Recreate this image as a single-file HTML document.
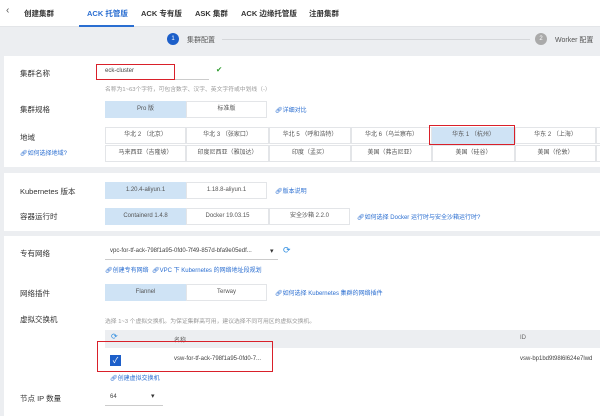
<!DOCTYPE html>
<html><head><meta charset="utf-8"><style>
*{box-sizing:border-box;margin:0;padding:0}
body{width:600px;height:412px;overflow:hidden;background:#eceef1;font-family:"Liberation Sans","Noto Sans CJK SC",sans-serif;position:relative;color:#333}
.a{position:absolute;white-space:nowrap}
.hdr{position:absolute;left:0;top:0;width:600px;height:27px;background:#fff;border-bottom:1px solid #e3e5e8}
.card{position:absolute;left:4px;width:600px;background:#fff}
.lbl{font-size:7.5px;color:#333}
.btn{position:absolute;height:17px;border:1px solid #e3e5e8;background:#fff;font-size:6px;color:#555;text-align:center;line-height:15px;overflow:hidden}
.sel{background:#cfe3f5;border-color:#cfe3f5}
.lnk{font-size:6px;color:#2a6ed1}
.red{position:absolute;border:1.5px solid #d9202a}
.hint{font-size:5.8px;color:#999}
.tab{font-size:7.5px;font-weight:bold;top:8px}
</style></head><body>
<div class="hdr"></div>
<div class="a" style="left:6px;top:5px;font-size:10px;color:#555">‹</div>
<div class="a tab" style="left:24px">创建集群</div>
<div class="a tab" style="left:87px;color:#2a6ed1">ACK 托管版</div>
<div class="a tab" style="left:141px">ACK 专有版</div>
<div class="a tab" style="left:195px">ASK 集群</div>
<div class="a tab" style="left:241px">ACK 边缘托管版</div>
<div class="a tab" style="left:309px">注册集群</div>
<div class="a" style="left:79px;top:25px;width:55px;height:2px;background:#2a6ed1"></div>

<div class="a" style="left:167px;top:33px;width:12px;height:12px;border-radius:50%;background:#1d5fc9;color:#fff;font-size:6px;text-align:center;line-height:12px">1</div>
<div class="a" style="left:187px;top:35px;font-size:7px;color:#555">集群配置</div>
<div class="a" style="left:222px;top:39px;width:308px;height:1px;background:#d5d7da"></div>
<div class="a" style="left:535px;top:33px;width:12px;height:12px;border-radius:50%;background:#aaa;color:#fff;font-size:6px;text-align:center;line-height:12px">2</div>
<div class="a" style="left:555px;top:35px;font-size:7px;color:#555">Worker 配置</div>

<div class="card" style="top:56px;height:111px"></div>
<div class="a lbl" style="left:20px;top:68px">集群名称</div>
<div class="a" style="left:105px;top:79px;width:104px;height:1px;background:#ccc"></div>
<div class="a" style="left:105px;top:68px;font-size:6px;color:#444">eck-cluster</div>
<div class="red" style="left:96px;top:64px;width:79px;height:16px"></div>
<div class="a" style="left:216px;top:65px;font-size:7.5px;color:#2a9a2a">✔</div>
<div class="a hint" style="left:105px;top:84px">名称为1~63个字符，可包含数字、汉字、英文字符或中划线（-）</div>
<div class="a lbl" style="left:20px;top:104px">集群规格</div>
<div class="btn sel" style="left:105px;top:101px;width:81px">Pro 版</div>
<div class="btn" style="left:186px;top:101px;width:81px">标准版</div>
<div class="a lnk" style="left:275px;top:105px">🔗︎详细对比</div>
<div class="a lbl" style="left:20px;top:132px">地域</div>
<div class="a lnk" style="left:20px;top:148px">🔗︎如何选择地域?</div>

<div class="btn" style="left:105px;top:127px;width:81px">华北 2 （北京）</div>
<div class="btn" style="left:186px;top:127px;width:83px">华北 3 （张家口）</div>
<div class="btn" style="left:269px;top:127px;width:82px">华北 5 （呼和浩特）</div>
<div class="btn" style="left:351px;top:127px;width:81px">华北 6（乌兰察布）</div>
<div class="btn sel" style="left:432px;top:127px;width:83px">华东 1 （杭州）</div>
<div class="btn" style="left:515px;top:127px;width:81px">华东 2 （上海）</div>
<div class="btn" style="left:596px;top:127px;width:20px"></div>
<div class="btn" style="left:105px;top:145px;width:81px">马来西亚（吉隆坡）</div>
<div class="btn" style="left:186px;top:145px;width:83px">印度尼西亚（雅加达）</div>
<div class="btn" style="left:269px;top:145px;width:82px">印度（孟买）</div>
<div class="btn" style="left:351px;top:145px;width:81px">美国（弗吉尼亚）</div>
<div class="btn" style="left:432px;top:145px;width:83px">美国（硅谷）</div>
<div class="btn" style="left:515px;top:145px;width:81px">美国（伦敦）</div>
<div class="btn" style="left:596px;top:145px;width:20px"></div>
<div class="red" style="left:429px;top:125px;width:86px;height:20px"></div>

<div class="card" style="top:173px;height:58px"></div>
<div class="a lbl" style="left:20px;top:186px">Kubernetes 版本</div>
<div class="btn sel" style="left:105px;top:182px;width:81px">1.20.4-aliyun.1</div>
<div class="btn" style="left:186px;top:182px;width:81px">1.18.8-aliyun.1</div>
<div class="a lnk" style="left:275px;top:186px">🔗︎版本说明</div>
<div class="a lbl" style="left:20px;top:211px">容器运行时</div>
<div class="btn sel" style="left:105px;top:208px;width:81px">Containerd 1.4.8</div>
<div class="btn" style="left:186px;top:208px;width:83px">Docker 19.03.15</div>
<div class="btn" style="left:269px;top:208px;width:81px">安全沙箱 2.2.0</div>
<div class="a lnk" style="left:357px;top:212px">🔗︎如何选择 Docker 运行时与安全沙箱运行时?</div>

<div class="card" style="top:236px;height:180px"></div>
<div class="a lbl" style="left:20px;top:248px">专有网络</div>
<div class="a" style="left:110px;top:248px;font-size:6px;color:#444">vpc-for-tf-ack-798f1a95-0fd0-7f49-857d-bfa9e05edf...</div>
<div class="a" style="left:270px;top:247px;font-size:7px">▾</div>
<div class="a" style="left:105px;top:259px;width:173px;height:1px;background:#ccc"></div>
<div class="a" style="left:283px;top:245px;font-size:9px;color:#2a8ae0">⟳</div>
<div class="a lnk" style="left:105px;top:265px">🔗︎创建专有网络 &nbsp;🔗︎VPC 下 Kubernetes 的网络地址段规划</div>
<div class="a lbl" style="left:20px;top:288px">网络插件</div>
<div class="btn sel" style="left:105px;top:284px;width:81px">Flannel</div>
<div class="btn" style="left:186px;top:284px;width:81px">Terway</div>
<div class="a lnk" style="left:275px;top:288px">🔗︎如何选择 Kubernetes 集群的网络插件</div>
<div class="a lbl" style="left:20px;top:314px">虚拟交换机</div>
<div class="a hint" style="left:105px;top:316px">选择 1~3 个虚拟交换机。为保证集群高可用，建议选择不同可用区的虚拟交换机。</div>
<div class="a" style="left:105px;top:330px;width:500px;height:18px;background:#eceef1"></div>
<div class="a" style="left:111px;top:332px;font-size:8px;color:#2a8ae0">⟳</div>
<div class="a" style="left:174px;top:335px;font-size:6px;color:#666">名称</div>
<div class="a" style="left:520px;top:335px;font-size:6px;color:#666">ID</div>
<div class="a" style="left:110px;top:355px;width:11px;height:11px;background:#1d5fc9;color:#fff;font-size:8px;line-height:11px;text-align:center">✓</div>
<div class="a" style="left:174px;top:356px;font-size:6px;color:#444">vsw-for-tf-ack-798f1a95-0fd0-7...</div>
<div class="a" style="left:520px;top:356px;font-size:6px;color:#444">vsw-bp1bd9t98l6l624e7lwd</div>
<div class="red" style="left:97px;top:341px;width:176px;height:31px"></div>
<div class="a lnk" style="left:110px;top:373px">🔗︎创建虚拟交换机</div>
<div class="a lbl" style="left:20px;top:393px">节点 IP 数量</div>
<div class="a" style="left:110px;top:394px;font-size:6px;color:#444">64</div>
<div class="a" style="left:151px;top:392px;font-size:7px">▾</div>
<div class="a" style="left:105px;top:405px;width:58px;height:1px;background:#ccc"></div>
</body></html>
